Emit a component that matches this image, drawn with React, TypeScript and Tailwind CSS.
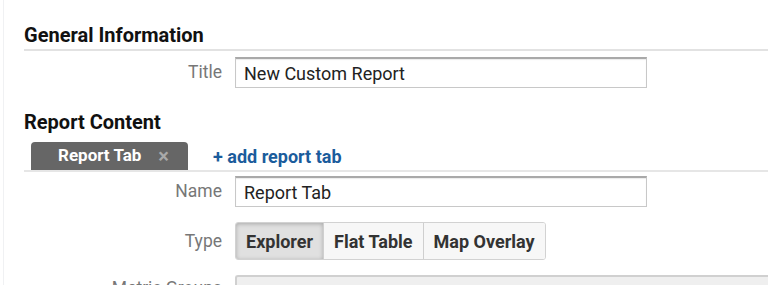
import React from 'react';

const font = { fontFamily: 'Roboto, "Noto Sans", sans-serif' };

interface FieldRowProps {
  label: string;
  children: React.ReactNode;
  className?: string;
}

const FieldRow: React.FC<FieldRowProps> = ({ label, children, className }) => (
  <div className={`flex items-center ${className ?? ''}`}>
    <div className="w-[198px] shrink-0 text-right text-[17.5px] text-[#777]">{label}</div>
    <div className="ml-[13px] shrink-0">{children}</div>
  </div>
);

const TextInput: React.FC<{ value: string }> = ({ value }) => (
  <div className="flex h-[31px] w-[412px] items-center border border-[#c8c8c8] border-t-2 border-t-[#a9a9a9] bg-white pl-[8px] text-[18px] text-[#222] shadow-[inset_0_1px_1px_rgba(0,0,0,0.08)]">
    {value}
  </div>
);

const types = ['Explorer', 'Flat Table', 'Map Overlay'];

export default function App() {
  return (
    <div className="h-[285px] w-[768px] overflow-hidden bg-white" style={font}>
      <div className="ml-[3px] h-full border-l border-[#f0f1f3] pl-[20px]">
        <h2 className="pt-[22px] text-[20px] font-bold leading-[26px] text-[#111]">General Information</h2>
        <div className="mt-[1px] h-[2px] bg-[#e2e2e2]" />
        <FieldRow label="Title" className="mt-[6px]">
          <TextInput value="New Custom Report" />
        </FieldRow>

        <h2 className="mt-[21px] text-[20px] font-bold leading-[26px] text-[#111]">Report Content</h2>
        <div className="mt-[7px] flex items-center">
          <div className="ml-[7px] flex h-[28px] w-[157px] items-center rounded-t-[4px] bg-[#666] pl-[27px] text-[17px] font-bold text-white">
            Report Tab
            <span className="ml-[17px] text-[20px] leading-none text-[#a9a9a9]">×</span>
          </div>
          <a className="ml-[25px] text-[18px] font-bold text-[#1b5c9c]">+ add report tab</a>
        </div>
        <div className="h-[2px] bg-[#e6e6e6]" />
        <FieldRow label="Name" className="mt-[4px]">
          <TextInput value="Report Tab" />
        </FieldRow>

        <FieldRow label="Type" className="mt-[15px]">
          <div className="flex h-[38px] overflow-hidden rounded-[3px] border border-[#d2d2d2]">
            {types.map((t, i) => (
              <div
                key={t}
                className={`flex items-center px-[10px] text-[18px] font-bold text-[#333] ${
                  i > 0 ? 'border-l border-[#cfcfcf]' : ''
                } ${i === 0 ? 'bg-[#e0e0e0] shadow-[inset_0_1px_4px_rgba(0,0,0,0.25)]' : 'bg-[#f7f7f7]'}`}
              >
                {t}
              </div>
            ))}
          </div>
        </FieldRow>

        <FieldRow label="Metric Groups" className="mt-[15px] items-start">
          <div className="h-[40px] w-[560px] rounded-tl-[3px] border-t-2 border-l-2 border-[#d0d0d0] bg-[#efefef]" />
        </FieldRow>
      </div>
    </div>
  );
}
